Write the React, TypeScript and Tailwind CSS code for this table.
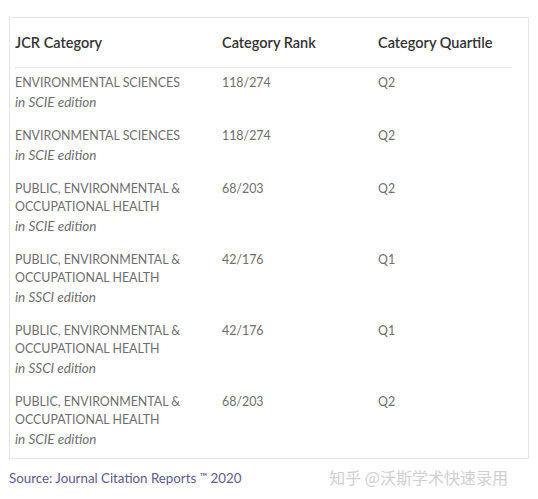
const rows = [
  { cat: ['ENVIRONMENTAL SCIENCES'], ed: 'SCIE', rank: '118/274', q: 'Q2' },
  { cat: ['ENVIRONMENTAL SCIENCES'], ed: 'SCIE', rank: '118/274', q: 'Q2' },
  { cat: ['PUBLIC, ENVIRONMENTAL &', 'OCCUPATIONAL HEALTH'], ed: 'SCIE', rank: '68/203', q: 'Q2' },
  { cat: ['PUBLIC, ENVIRONMENTAL &', 'OCCUPATIONAL HEALTH'], ed: 'SSCI', rank: '42/176', q: 'Q1' },
  { cat: ['PUBLIC, ENVIRONMENTAL &', 'OCCUPATIONAL HEALTH'], ed: 'SSCI', rank: '42/176', q: 'Q1' },
  { cat: ['PUBLIC, ENVIRONMENTAL &', 'OCCUPATIONAL HEALTH'], ed: 'SCIE', rank: '68/203', q: 'Q2' },
];

export default function App() {
  return (
    <div className="w-[538px] h-[499px] bg-white pt-[17px] pl-[9px] font-['Lato','Noto_Sans',sans-serif]">
      {/* table card */}
      <div className="w-[520px] border border-[#e6e6e6] pl-[5px] pr-[16px]">
        <div className="flex pt-[16px] pb-[15px] border-b border-[#e3e3e3] text-[14.5px] leading-[18px] font-semibold text-[#333]">
          <div className="w-[207px]">JCR Category</div>
          <div className="w-[156px]">Category Rank</div>
          <div className="flex-1">Category Quartile</div>
        </div>
        {rows.map((r, i) => (
          <div key={i} className="flex pt-[6px] pb-[10px] text-[12.4px] leading-[18px] text-[#6e6e6e]">
            <div className="w-[207px]">
              {r.cat.map((c) => (
                <div key={c}>{c}</div>
              ))}
              <div className="italic text-[13.5px] mt-[1px]">in {r.ed} edition</div>
            </div>
            <div className="w-[156px]">{r.rank}</div>
            <div className="flex-1">{r.q}</div>
          </div>
        ))}
      </div>

      {/* source + watermark */}
      <div className="flex items-center justify-between pr-[30px] mt-[10px]">
        <div className="text-[13.3px] text-[#5d5a8e]">
          Source: Journal Citation Reports <span className="text-[10px] align-[3px]">™</span> 2020
        </div>
        <div className="text-[16px] text-[#d0d0d0] font-['Noto_Sans_CJK_SC',sans-serif] -mt-[4px]">
          知乎 @沃斯学术快速录用
        </div>
      </div>
    </div>
  );
}
